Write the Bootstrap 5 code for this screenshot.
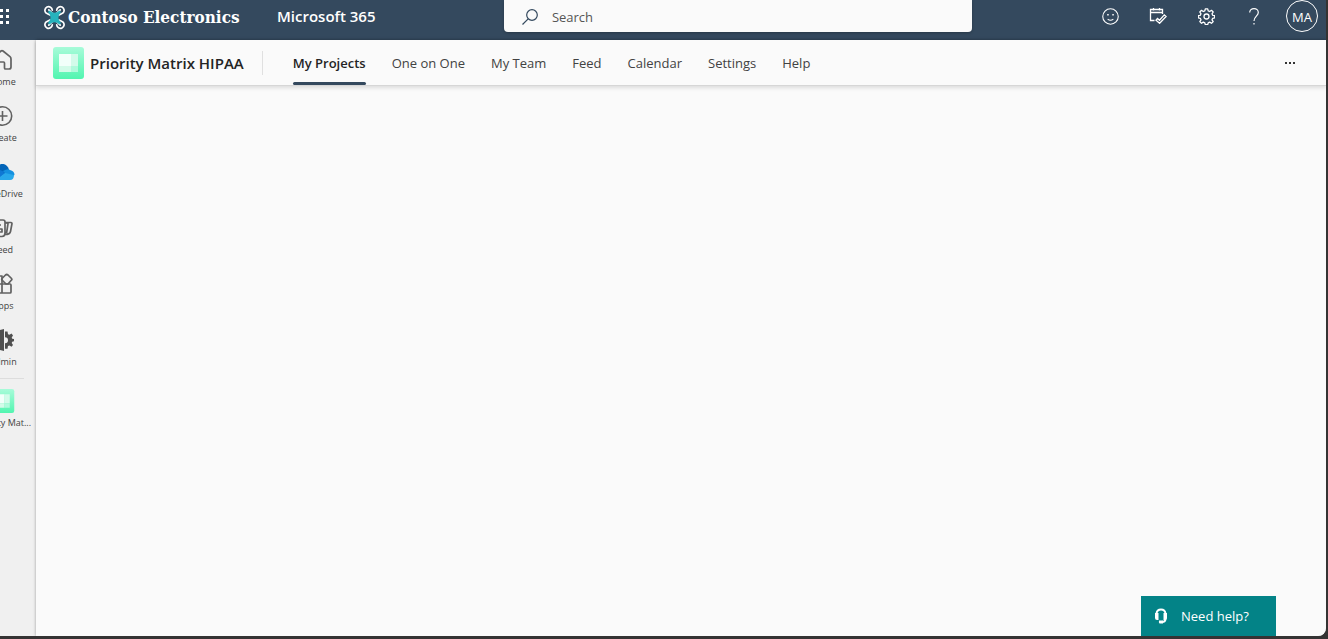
<!DOCTYPE html>
<html lang="en">
<head>
<meta charset="utf-8">
<meta name="viewport" content="width=device-width, initial-scale=1">
<title>Priority Matrix HIPAA</title>
<link rel="stylesheet" href="https://cdn.jsdelivr.net/npm/bootstrap@5.3.0/dist/css/bootstrap.min.css">
<style>
  :root { --suite: #34495e; --frame: #343333; --surface: #fafafa; --text: #424242; --strong: #242424; }
  body { background: var(--frame); font-family: "Open Sans", "Noto Sans", sans-serif; font-size: 13px; line-height: 20px; color: var(--text); padding: 0 2px 3px 0; }
  .window { background: var(--surface); border-bottom-right-radius: 8px; overflow: hidden; }
  button { background: none; border: 0; padding: 0; color: inherit; font: inherit; }
  svg { display: block; flex: none; }

  .suite { background: var(--suite); color: #fff; height: 40px; }
  .suite-start { flex: 0 0 38%; height: 32px; }
  .waffle { width: 44px; overflow: hidden; }
  .tenant { font-family: "DejaVu Serif Condensed", "DejaVu Serif", serif; font-size: 17px; font-weight: 700; line-height: 24px; width: 233px; padding-top: 2px; }
  .suite-name { font-size: 15px; font-weight: 600; }
  .search { background: var(--surface); flex: 0 1 468px; height: 32px; border-radius: 0 0 4px 4px; padding: 1px 20px 0 18px; box-shadow: 0 1px 3px rgba(0,0,0,.25); }
  .search input { outline: 0; background: none; color: var(--text); font-size: 13px; margin-left: 14px; }
  .search input::placeholder { color: #555; opacity: 1; }
  .suite-btn { width: 48px; height: 32px; }
  .avatar { width: 32px; height: 32px; border: 1px solid #fff; padding-top: 1px; }

  .rail { background: #f0f0f0; width: 66px; margin-left: -30px; font-size: 9px; line-height: 12px; }
  .rail-item { height: 56px; width: 66px; color: var(--text); }
  .rail hr { width: 42px; margin: 2px 0; border-color: #a5a5a5; }
  .pane { background: var(--surface); box-shadow: 0 0 3px rgba(0,0,0,.35); }

  .app-bar { height: 46px; border-bottom: 1px solid #d6d6d6; box-shadow: 0 2px 4px rgba(0,0,0,.12); padding: 0 24px 0 17px; }
  .app-title { font-size: 15px; font-weight: 600; color: var(--strong); margin: 0 18px 0 5px; }
  .app-rule { width: 1px; height: 24px; background: #e0e0e0; }
  .tabs { column-gap: 26px; margin-left: 30px; }
  .tabs a { color: var(--text); height: 45px; line-height: 46px; text-decoration: none; white-space: nowrap; }
  .tabs a.active { color: var(--strong); font-weight: 600; position: relative; }
  .tabs a.active::after { content: ""; position: absolute; left: 0; right: 0; bottom: 0; height: 3px; border-radius: 2px; background: var(--suite); }
  .help { background: #038387; color: #fff; width: 135px; height: 40px; margin-right: 50px; }
</style>
</head>
<body class="vh-100 d-flex flex-column">
<svg width="0" height="0" class="position-absolute" aria-hidden="true">
  <defs>
    <linearGradient id="mint" x1="0" y1="0" x2="0" y2="1"><stop offset="0" stop-color="#a8fbd9"/><stop offset="1" stop-color="#52f5b0"/></linearGradient>
    <symbol id="matrix" viewBox="0 0 32 32">
      <rect width="31" height="32" rx="3" fill="url(#mint)"/>
      <path fill="#f2fffa" d="M6 7h12v12H6z"/><path fill="#d3fbea" d="M18 7h7v12h-7z"/><path fill="#d3fbe9" d="M6 19h12v6H6z"/><path fill="#b0fadc" d="M18 19h7v6h-7z"/>
    </symbol>
  </defs>
</svg>
<div class="window d-flex flex-column flex-grow-1">
  <header class="suite d-flex align-items-start flex-shrink-0">
    <div class="suite-start d-flex align-items-center">
      <button class="waffle" aria-label="App launcher">
        <svg width="10" height="16" fill="#fff"><path d="M0 1h3v3H0zM6 1h3v3H6zM0 7h3v3H0zM6 7h3v3H6zM0 13h3v3H0zM6 13h3v3H6z"/></svg>
      </button>
      <a href="#" class="tenant d-flex align-items-center text-white text-decoration-none text-nowrap">
        <svg width="24" height="25" viewBox="0 0 24 25" fill="none">
          <g stroke="#fff" stroke-width="1.700" stroke-linecap="round">
            <path d="M2.200 8.200A3.700 3.700 0 1 1 8.300 5.200M12.700 5.200a3.700 3.700 0 1 1 6.100 3M2.200 16.800a3.700 3.700 0 1 0 6.100 3M12.700 19.800a3.700 3.700 0 1 0 6.100-3"/>
            <path d="M4.800 4.800 8 8M16.200 4.800 13 8M4.800 20.200 8 17M16.200 20.200 13 17M3 8.500l3 1.500M18 8.500 15 10M3 16.500 6 15M18 16.500 15 15"/>
          </g>
          <path fill="#26b3bd" d="M5.500 5.500Q10.500 10 15.500 5.500L17 7q-5 5.500 0 11l-1.500 1.500q-5-4.500-10 0L4 18q5-5.500 0-11z"/>
        </svg>
        <span>Contoso Electronics</span>
      </a>
      <a href="#" class="suite-name text-white text-decoration-none text-nowrap">Microsoft 365</a>
    </div>
    <form class="search d-flex align-items-center" role="search">
      <svg width="16" height="16" viewBox="0 0 16 16" fill="none" stroke="#34495e" stroke-width="1.200"><circle cx="10" cy="6" r="5.300"/><path d="M6.200 9.800.5 15.500"/></svg>
      <input class="border-0 p-0 flex-grow-1" type="search" placeholder="Search" aria-label="Search">
    </form>
    <div class="d-flex ms-auto">
      <button class="suite-btn d-flex align-items-center justify-content-center" aria-label="Feedback">
        <svg width="17" height="17" viewBox="0 0 16 16" fill="none" stroke="#fff"><circle cx="8" cy="8" r="7.300"/><path d="M5.300 10.500q2.700 2 5.400 0"/><path stroke="none" fill="#fff" d="M4.900 5.700h1.400v1.400H4.900zM9.700 5.700h1.400v1.400H9.700z"/></svg>
      </button>
      <button class="suite-btn d-flex align-items-center justify-content-center" aria-label="My Day">
        <svg width="18" height="16" viewBox="0 0 18 16" fill="none" stroke="#fff" stroke-width="1.300"><path d="M5.500 12.500H1.500v-11h12V6M1.500 4.500h12M4.500 0v2.500M10.500 0v2.500"/><path d="m7 12.200 1.500-1.700 2 1.800 4.800-5.400 1.800 1.600-6.500 6.800z"/></svg>
      </button>
      <button class="suite-btn d-flex align-items-center justify-content-center" aria-label="Settings">
        <svg width="17" height="17" viewBox="0 0 17 17" fill="none" stroke="#fff" stroke-width="1.300" stroke-linejoin="round"><circle cx="8.500" cy="8.500" r="2.500"/><path d="M7.300.8h2.400l.5 2 1.500.7L13.500 2.300l1.700 1.700-1.200 1.800.7 1.500 2 .4v2.200l-2 .5-.7 1.400 1.200 1.800-1.700 1.700-1.800-1.200-1.500.7-.5 1.900H7.300l-.5-1.900-1.500-.7-1.800 1.200L1.800 13.600 3 11.800l-.7-1.400-2-.5V7.700l2-.4.700-1.500L1.800 4l1.700-1.700L5.300 3.500l1.500-.7z"/></svg>
      </button>
      <button class="suite-btn d-flex align-items-center justify-content-center" aria-label="Help">
        <svg width="10" height="17" viewBox="0 0 10 17" fill="none" stroke="#fff" stroke-width="1.200"><path d="M.7 4.500C.7 2 2.500.7 5 .7s4.300 1.500 4.300 3.800c0 3.500-4.300 4-4.300 8.500"/><path d="M4.400 15h1.200v1.500H4.400z" fill="#fff" stroke="none"/></svg>
      </button>
      <button class="suite-btn d-flex align-items-center justify-content-center" aria-label="Account manager">
        <span class="avatar rounded-circle d-flex align-items-center justify-content-center">MA</span>
      </button>
    </div>
  </header>

  <div class="d-flex flex-grow-1">
    <nav class="rail d-flex flex-column align-items-center flex-shrink-0" aria-label="Apps">
      <a href="#" class="rail-item d-flex flex-column align-items-center text-decoration-none pt-2">
        <svg class="mb-1" width="24" height="24" viewBox="0 0 24 24" fill="none" stroke="#616161" stroke-width="1.700" stroke-linejoin="round"><path d="M10 3 3 9v11q0 1 1 1h3v-6q0-1 1-1h4.500q1 0 1 1v5q0 1 1 1H18q2 0 2-2v-8q0-1.500-1-2.300L12 3q-1-.8-2 0z"/></svg>
        Home</a>
      <a href="#" class="rail-item d-flex flex-column align-items-center text-decoration-none pt-2">
        <svg class="mb-1" width="24" height="24" viewBox="0 0 24 24" fill="none" stroke="#616161" stroke-width="1.600"><circle cx="11.500" cy="12" r="9.200"/><path d="M11.500 7v10M6.500 12h10"/></svg>
        Create</a>
      <a href="#" class="rail-item d-flex flex-column align-items-center text-decoration-none pt-2">
        <svg class="mb-1" width="24" height="24" viewBox="0 0 24 24"><path fill="#0364b8" d="M4 11C6 2 16 2 18 10l-5 5z"/><path fill="#0f78d4" d="M5 10q6-1 9 4l-8 6H5Q0 19 0 15t5-5z"/><path fill="#1490df" d="M12 11q5-3 7-1 4.500 1 4.500 5l-6 2z"/><path fill="#28a8ea" d="M5 20l9-7 9 2Q23 20 19 20z"/></svg>
        OneDrive</a>
      <a href="#" class="rail-item d-flex flex-column align-items-center text-decoration-none pt-2">
        <svg class="mb-1" width="24" height="24" viewBox="0 0 24 24" fill="none" stroke="#616161" stroke-width="1.700" stroke-linejoin="round"><path d="M3 4h9q2 0 2 2v11q0 3.500-3 3.500H6q-4 0-4-3.500V5M6 9h4M8 13h3v3H8zM14 6.500h6q1 0 1 1l-1.500 8Q19 18.500 14 18.500M14 6.500l3 1-1.500 10"/></svg>
        Feed</a>
      <a href="#" class="rail-item d-flex flex-column align-items-center text-decoration-none pt-2">
        <svg class="mb-1" width="24" height="24" viewBox="0 0 24 24" fill="none" stroke="#616161" stroke-width="1.700" stroke-linejoin="round"><path d="M2.500 4H11v8H2.500zM2.500 12H19q1 0 1 1v7q0 1-1 1H3.500q-1 0-1-1zM11 12v9"/><path d="m17 3 3.500 3.500q.8.800 0 1.500L17 12h-2l-4-4q-.7-.7 0-1.500L14.500 3q1.200-1 2.500 0z"/></svg>
        Apps</a>
      <a href="#" class="rail-item d-flex flex-column align-items-center text-decoration-none pt-2">
        <svg class="mb-1" width="24" height="24" viewBox="0 0 24 24" fill="#505050"><path d="M2 4l11-3v22L2 20z"/><path d="M14 3.500h2.500l.5 2.700 1.500.6 2-1.300 1.500 2-1.300 1.900.5 1.300 1.800.3v2.300l-1.800.4-.5 1.300 1.300 1.900-1.500 1.900-2-1.300-1.500.6-.5 2.600H14v-5.500a3 3 0 0 0 0-6z"/></svg>
        Admin</a>
      <hr>
      <a href="#" class="rail-item d-flex flex-column align-items-center text-decoration-none pt-2 text-nowrap">
        <svg class="mb-1" width="24" height="24" viewBox="0 0 32 32"><use href="#matrix"/></svg>
        Priority Mat...</a>
    </nav>

    <div class="pane d-flex flex-column flex-grow-1">
      <div class="app-bar d-flex align-items-center">
        <svg width="32" height="32"><use href="#matrix"/></svg>
        <h1 class="app-title text-nowrap">Priority Matrix HIPAA</h1>
        <span class="app-rule"></span>
        <nav class="tabs d-flex" aria-label="Priority Matrix">
          <a href="#" class="active" aria-current="page">My Projects</a>
          <a href="#">One on One</a>
          <a href="#">My Team</a>
          <a href="#">Feed</a>
          <a href="#">Calendar</a>
          <a href="#">Settings</a>
          <a href="#">Help</a>
        </nav>
        <button class="ms-auto px-1" aria-label="More options">
          <svg width="16" height="16" viewBox="0 0 16 16" fill="#333"><path d="M3 7h2v2H3zM7 7h2v2H7zM11 7h2v2h-2z"/></svg>
        </button>
      </div>
      <main class="flex-grow-1 d-flex align-items-end justify-content-end">
        <button class="help d-flex align-items-center">
          <svg class="ms-2" width="24" height="24" viewBox="0 0 24 24" fill="none"><path d="M7.500 13V9.500Q8 5.500 12 5.500t4.500 4v5Q16.500 18 13 18" stroke="#fff" stroke-width="2"/><path fill="#fff" d="M6 9h3.500v7H8q-2 0-2-2zM14.500 9H18v5q0 2-2 2h-1.500zM10 16.500h4v3h-3.500q-1-1-.5-3z"/></svg>
          <span class="ms-2">Need help?</span>
        </button>
      </main>
    </div>
  </div>
</div>
<script src="https://cdn.jsdelivr.net/npm/bootstrap@5.3.0/dist/js/bootstrap.bundle.min.js"></script>
</body>
</html>
